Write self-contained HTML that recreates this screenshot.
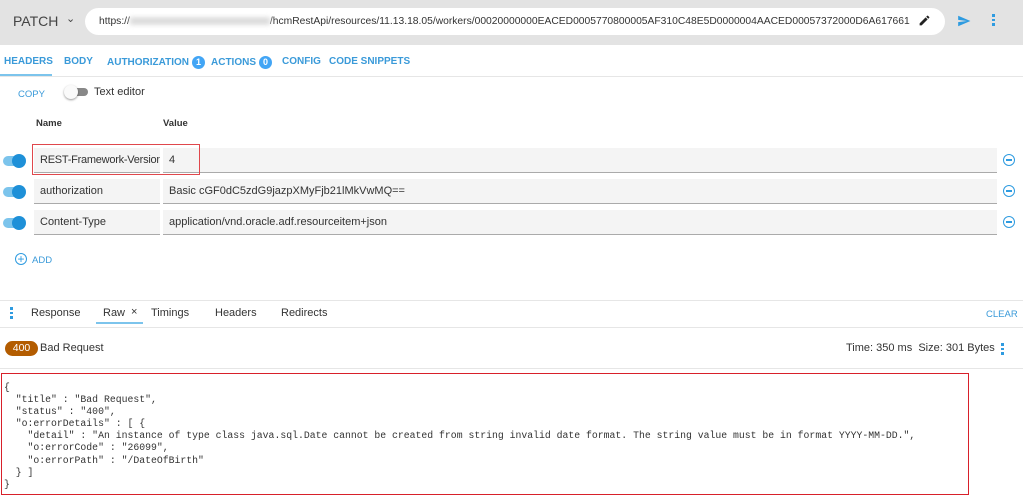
<!DOCTYPE html>
<html><head><style>
body{margin:0;width:1023px;height:502px;background:#fff;font-family:"Liberation Sans",sans-serif;position:relative;overflow:hidden;color:#333}
.a{position:absolute;white-space:nowrap}
.top{left:0;top:0;width:1023px;height:45px;background:#e3e3e3}
.url{left:85px;top:8px;width:860px;height:27px;background:#fff;border-radius:14px;font-size:10.3px;line-height:27px;overflow:hidden}
.tab{top:56px;font-size:10px;font-weight:bold;color:#3a9ad9}
.badge{display:inline-block;width:13px;height:13px;border-radius:7px;background:#42a5f5;color:#fff;font-size:9px;text-align:center;line-height:13px;margin-left:3px}
.cell{background:#f4f4f4;border-bottom:1px solid #aaa;height:25px;font-size:11px;line-height:25px;color:#333;overflow:hidden}
.tog{width:20px;height:10px;border-radius:5px;background:#7cc4ec}
.knob{width:14px;height:14px;border-radius:7px;background:#1e90d8}
.min{width:10px;height:10px;border:1.5px solid #2e9be0;border-radius:50%}
.min:after{content:"";position:absolute;left:2px;top:4px;width:6px;height:1.5px;background:#2e9be0}
pre.a{margin:0;font-family:"Liberation Mono",monospace;font-size:9.8px;line-height:12.1px;color:#333;white-space:pre}
.dots div{width:2.5px;height:2.5px;background:#2e9be0;margin-bottom:2px}
</style></head><body>
<div class="a top"></div>
<div class="a" style="left:13px;top:13px;font-size:14px;color:#444">PATCH</div>
<div class="a" style="left:66px;top:12px;font-size:11px;color:#444">&#8964;</div>
<div class="a url"><span style="margin-left:14px">https://</span><span style="display:inline-block;width:140px;height:8px;background:#ddd;vertical-align:middle;filter:blur(2px)"></span>/hcmRestApi/resources/11.13.18.05/workers/00020000000EACED0005770800005AF310C48E5D0000004AACED00057372000D6A617661</div>
<svg class="a" style="left:918px;top:14px" width="13" height="13" viewBox="0 0 24 24"><path d="M3 17.25V21h3.75L17.81 9.94l-3.75-3.75zM20.71 7.04a1 1 0 000-1.41l-2.34-2.34a1 1 0 00-1.41 0l-1.83 1.83 3.75 3.75z" fill="#222"/></svg>
<svg class="a" style="left:956px;top:14px" width="16" height="14" viewBox="0 0 24 24"><path d="M2 21l21-9L2 3v7l15 2-15 2z" fill="#2e9be0"/></svg>
<div class="a dots" style="left:992px;top:14px;width:3px"><div></div><div></div><div></div></div>
<div class="a tab" style="left:4px">HEADERS</div>
<div class="a" style="left:0;top:74px;width:52px;height:2px;background:#7cc4ec"></div>
<div class="a tab" style="left:64px">BODY</div>
<div class="a tab" style="left:107px">AUTHORIZATION<span class="badge">1</span></div>
<div class="a tab" style="left:211px">ACTIONS<span class="badge">0</span></div>
<div class="a tab" style="left:282px">CONFIG</div>
<div class="a tab" style="left:329px">CODE SNIPPETS</div>
<div class="a" style="left:0;top:76px;width:1023px;height:1px;background:#e6e6e6"></div>
<div class="a" style="left:18px;top:89px;font-size:9.5px;color:#3a9ad9">COPY</div>
<div class="a" style="left:66px;top:88px;width:22px;height:8px;border-radius:4px;background:#888"></div>
<div class="a" style="left:64px;top:85px;width:14px;height:14px;border-radius:7px;background:#fafafa;box-shadow:0 1px 2px rgba(0,0,0,.4)"></div>
<div class="a" style="left:94px;top:86px;font-size:11px">Text editor</div>
<div class="a" style="left:36px;top:118px;font-size:9.5px;font-weight:bold">Name</div>
<div class="a" style="left:163px;top:118px;font-size:9.5px;font-weight:bold">Value</div>

<div class="a cell" style="left:34px;top:148px;width:126px;padding-left:6px;box-sizing:border-box;letter-spacing:-0.25px">REST-Framework-Version</div>
<div class="a cell" style="left:163px;top:148px;width:834px;padding-left:6px;box-sizing:border-box">4</div>
<div class="a cell" style="left:34px;top:179px;width:126px;padding-left:6px;box-sizing:border-box">authorization</div>
<div class="a cell" style="left:163px;top:179px;width:834px;padding-left:6px;box-sizing:border-box">Basic cGF0dC5zdG9jazpXMyFjb21lMkVwMQ==</div>
<div class="a cell" style="left:34px;top:210px;width:126px;padding-left:6px;box-sizing:border-box">Content-Type</div>
<div class="a cell" style="left:163px;top:210px;width:834px;padding-left:6px;box-sizing:border-box">application/vnd.oracle.adf.resourceitem+json</div>
<div class="a" style="left:32px;top:144px;width:166px;height:29px;border:1.5px solid #e0474c"></div>

<div class="a tog" style="left:3px;top:156px"></div><div class="a knob" style="left:12px;top:154px"></div>
<div class="a tog" style="left:3px;top:187px"></div><div class="a knob" style="left:12px;top:185px"></div>
<div class="a tog" style="left:3px;top:218px"></div><div class="a knob" style="left:12px;top:216px"></div>
<div class="a min" style="left:1003px;top:154px"></div>
<div class="a min" style="left:1003px;top:185px"></div>
<div class="a min" style="left:1003px;top:216px"></div>

<div class="a" style="left:15px;top:253px;width:10px;height:10px;border:1.5px solid #2e9be0;border-radius:50%;color:#2e9be0;font-size:12px;line-height:10px;text-align:center">+</div>
<div class="a" style="left:32px;top:255px;font-size:9.5px;color:#3a9ad9">ADD</div>

<div class="a" style="left:0;top:300px;width:1023px;height:1px;background:#e6e6e6"></div>
<div class="a dots" style="left:10px;top:307px;width:3px"><div></div><div></div><div></div></div>
<div class="a" style="left:31px;top:307px;font-size:11px">Response</div>
<div class="a" style="left:103px;top:307px;font-size:11px">Raw</div>
<div class="a" style="left:131px;top:306px;font-size:11px">×</div>
<div class="a" style="left:96px;top:322px;width:47px;height:1.5px;background:#7cc4ec"></div>
<div class="a" style="left:151px;top:307px;font-size:11px">Timings</div>
<div class="a" style="left:215px;top:307px;font-size:11px">Headers</div>
<div class="a" style="left:281px;top:307px;font-size:11px">Redirects</div>
<div class="a" style="left:986px;top:309px;font-size:9.5px;color:#3a9ad9">CLEAR</div>
<div class="a" style="left:0;top:327px;width:1023px;height:1px;background:#e6e6e6"></div>
<div class="a" style="left:5px;top:341px;width:33px;height:15px;border-radius:8px;background:#b35c00;color:#fff;font-size:10.5px;line-height:15px;text-align:center">400</div>
<div class="a" style="left:40px;top:342px;font-size:11px">Bad Request</div>
<div class="a" style="left:846px;top:342px;font-size:11px">Time: 350 ms&nbsp;&nbsp;Size: 301 Bytes</div>
<div class="a dots" style="left:1001px;top:343px;width:3px"><div></div><div></div><div></div></div>
<div class="a" style="left:0;top:368px;width:1023px;height:1px;background:#e6e6e6"></div>
<div class="a" style="left:1px;top:373px;width:966px;height:120px;border:1.5px solid #d8202a"></div>
<pre class="a" style="left:4px;top:382px">{
  "title" : "Bad Request",
  "status" : "400",
  "o:errorDetails" : [ {
    "detail" : "An instance of type class java.sql.Date cannot be created from string invalid date format. The string value must be in format YYYY-MM-DD.",
    "o:errorCode" : "26099",
    "o:errorPath" : "/DateOfBirth"
  } ]
}</pre>
</body></html>
